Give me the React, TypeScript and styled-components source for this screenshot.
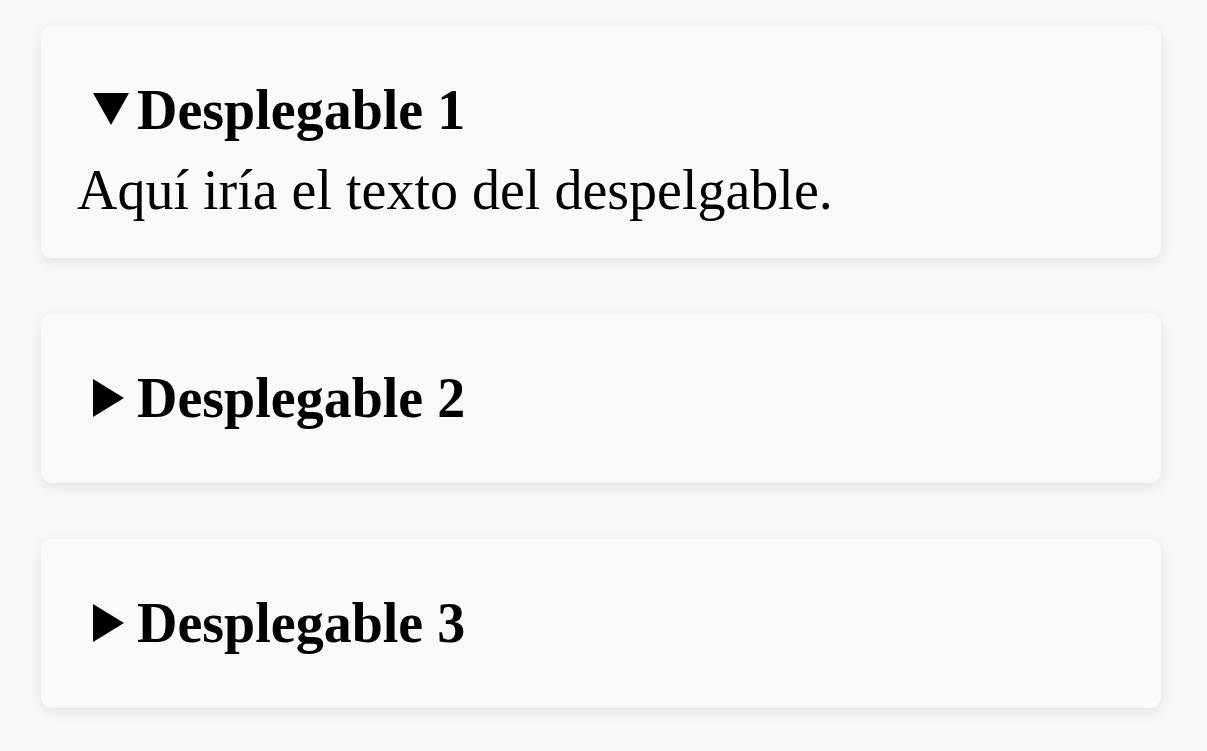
import React, { useState } from "react";
import styled, { createGlobalStyle } from "styled-components";

const Global = createGlobalStyle`
  html, body { margin: 0; padding: 0; background: #f7f7f7; }
  body { font-family: "Liberation Serif", "Times New Roman", serif; color: #000; }
`;

const Page = styled.main`
  display: flex;
  flex-direction: column;
  gap: 56px;
  padding: 26px 46px 40px 41px;
`;

const Card = styled.details`
  background: #f9f9f9;
  border-radius: 11px;
  padding: 36px;
  box-shadow: 0 4px 14px rgba(0, 0, 0, 0.08);
  font-size: 56px;
  line-height: normal;
`;

const Summary = styled.summary`
  display: block;
  list-style: none;
  font-weight: bold;
  padding: 16px 16px 17px;
  cursor: pointer;
  &::-webkit-details-marker { display: none; }
  &::marker { content: ""; }
`;

const MarkerBox = styled.span`
  display: inline-block;
  width: 37px;
  margin-right: 7px;
  vertical-align: baseline;
`;

const Triangle = styled.span<{ $open: boolean }>`
  display: inline-block;
  width: 0;
  height: 0;
  vertical-align: baseline;
  ${(p) =>
    p.$open
      ? `
    border-top: 32px solid #000;
    border-left: 18.5px solid transparent;
    border-right: 18.5px solid transparent;
    margin-bottom: 4px;
  `
      : `
    border-left: 31px solid #000;
    border-top: 19px solid transparent;
    border-bottom: 19px solid transparent;
  `}
`;

const Body = styled.p`
  margin: 0;
  line-height: 63px;
`;

const items = [
  { title: "Desplegable 1", text: "Aquí iría el texto del despelgable.", open: true },
  { title: "Desplegable 2", text: "Aquí iría el texto del despelgable.", open: false },
  { title: "Desplegable 3", text: "Aquí iría el texto del despelgable.", open: false },
];

function Item({ title, text, open }: { title: string; text: string; open: boolean }) {
  const [isOpen, setOpen] = useState(open);
  return (
    <Card open={isOpen} onToggle={(e) => setOpen((e.currentTarget as HTMLDetailsElement).open)}>
      <Summary>
        <MarkerBox>
          <Triangle $open={isOpen} />
        </MarkerBox>
        {title}
      </Summary>
      <Body>{text}</Body>
    </Card>
  );
}

export default function App() {
  return (
    <>
      <Global />
      <Page>
        {items.map((it) => (
          <Item key={it.title} {...it} />
        ))}
      </Page>
    </>
  );
}
